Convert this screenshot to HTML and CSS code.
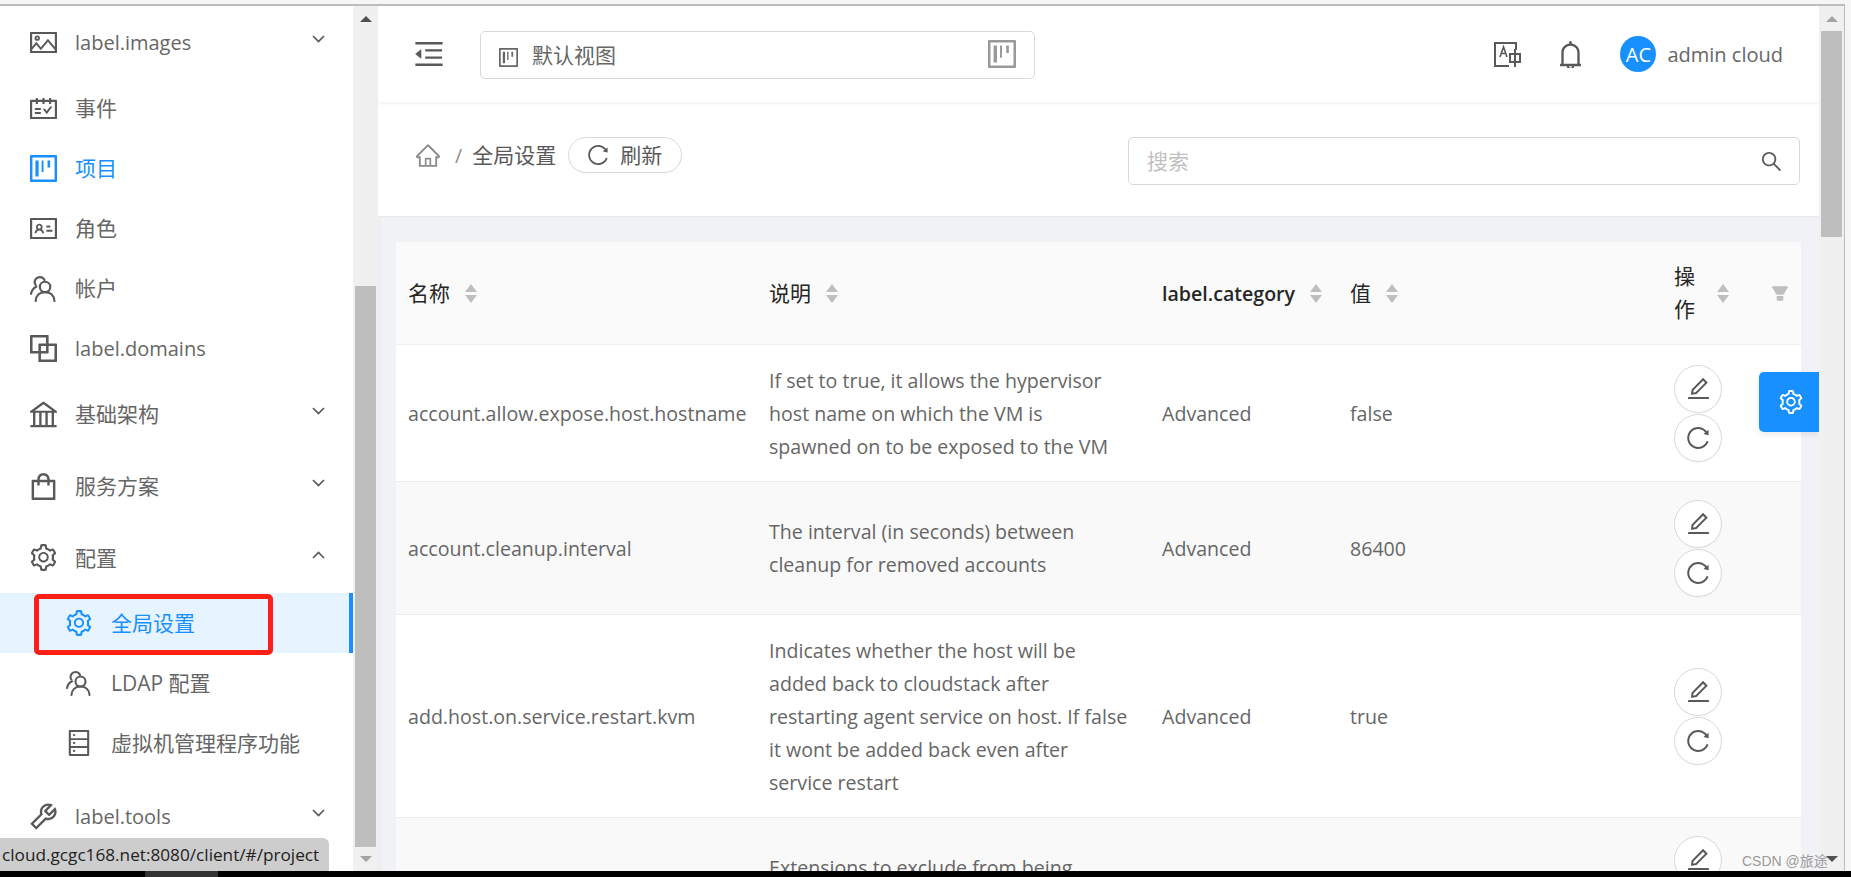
FILE: index.html
```html
<!DOCTYPE html>
<html lang="zh-CN">
<head>
<meta charset="utf-8">
<title>全局设置</title>
<link rel="stylesheet" href="styles.css">
</head>
<body>
<svg class="defs" aria-hidden="true">
  <symbol id="i-setting" viewBox="88 60 848 904"><path d="M924.8 625.7l-65.5-56c3.1-19 4.7-38.4 4.7-57.8s-1.6-38.8-4.7-57.8l65.5-56a32.03 32.03 0 0 0 9.3-35.2l-.9-2.6a443.74 443.74 0 0 0-79.7-137.9l-1.8-2.1a32.12 32.12 0 0 0-35.1-9.5l-81.3 28.9c-30-24.6-63.5-44-99.7-57.6l-15.7-85a32.05 32.05 0 0 0-25.8-25.7l-2.7-.5c-52.1-9.4-106.9-9.4-159 0l-2.7.5a32.05 32.05 0 0 0-25.8 25.7l-15.8 85.4a351.86 351.86 0 0 0-99 57.4l-81.9-29.1a32 32 0 0 0-35.1 9.5l-1.8 2.1a446.02 446.02 0 0 0-79.7 137.9l-.9 2.6c-4.5 12.5-.8 26.5 9.3 35.2l66.3 56.6c-3.1 18.8-4.6 38-4.6 57.1 0 19.2 1.5 38.4 4.6 57.1L99 625.5a32.03 32.03 0 0 0-9.3 35.2l.9 2.6c18.1 50.4 44.9 96.9 79.7 137.9l1.8 2.1a32.12 32.12 0 0 0 35.1 9.5l81.9-29.1c29.8 24.5 63.1 43.9 99 57.4l15.8 85.4a32.05 32.05 0 0 0 25.8 25.7l2.7.5a449.4 449.4 0 0 0 159 0l2.7-.5a32.05 32.05 0 0 0 25.8-25.7l15.7-85a350 350 0 0 0 99.7-57.6l81.3 28.9a32 32 0 0 0 35.1-9.5l1.8-2.1c34.8-41.1 61.6-87.5 79.7-137.9l.9-2.6c4.5-12.3.8-26.3-9.3-35zM788.3 465.9c2.5 15.1 3.8 30.6 3.8 46.1s-1.3 31-3.8 46.1l-6.6 40.1 74.7 63.9a370.03 370.03 0 0 1-42.6 73.6L721 702.8l-31.4 25.8c-23.9 19.6-50.5 35-79.3 45.8l-38.1 14.3-17.9 97a377.5 377.5 0 0 1-85 0l-17.9-97.2-37.8-14.5c-28.5-10.8-55-26.2-78.7-45.7l-31.4-25.9-93.4 33.2c-17-22.9-31.2-47.6-42.6-73.6l75.5-64.5-6.5-40c-2.4-14.9-3.7-30.3-3.7-45.5 0-15.3 1.2-30.6 3.7-45.5l6.5-40-75.5-64.5c11.3-26.1 25.6-50.7 42.6-73.6l93.4 33.2 31.4-25.9c23.7-19.5 50.2-34.9 78.7-45.7l37.9-14.3 17.9-97.2c28.1-3.2 56.8-3.2 85 0l17.9 97 38.1 14.3c28.7 10.8 55.4 26.2 79.3 45.8l31.4 25.8 92.8-32.9c17 22.9 31.2 47.6 42.6 73.6L781.8 426l6.5 39.9zM512 326c-97.2 0-176 78.8-176 176s78.8 176 176 176 176-78.8 176-176-78.8-176-176-176zm79.2 255.2A111.6 111.6 0 0 1 512 614c-29.9 0-58-11.7-79.2-32.8A111.6 111.6 0 0 1 400 502c0-29.9 11.7-58 32.8-79.2C454 401.6 482.1 390 512 390c29.9 0 58 11.6 79.2 32.8A111.6 111.6 0 0 1 624 502c0 29.9-11.7 58-32.8 79.2z"/></symbol>
  <symbol id="i-picture" viewBox="64 160 896 704"><path d="M928 160H96c-17.7 0-32 14.3-32 32v640c0 17.7 14.3 32 32 32h832c17.7 0 32-14.3 32-32V192c0-17.7-14.3-32-32-32zm-40 632H136v-39.9l138.5-164.3 150.1 178L658.1 489 888 761.6V792zm0-129.8L664.2 396.8c-3.2-3.8-9-3.8-12.2 0L424.6 666.4l-144-170.7c-3.2-3.8-9-3.8-12.2 0L136 652.7V232h752v430.2zM304 456a88 88 0 1 0 0-176 88 88 0 0 0 0 176zm0-116c15.5 0 28 12.5 28 28s-12.5 28-28 28-28-12.5-28-28 12.5-28 28-28z"/></symbol>
  <symbol id="i-schedule" viewBox="64 160 896 704"><path d="M928 224H768v-56c0-4.4-3.6-8-8-8h-56c-4.4 0-8 3.6-8 8v56H548v-56c0-4.4-3.6-8-8-8h-56c-4.4 0-8 3.6-8 8v56H328v-56c0-4.4-3.6-8-8-8h-56c-4.4 0-8 3.6-8 8v56H96c-17.7 0-32 14.3-32 32v576c0 17.7 14.3 32 32 32h832c17.7 0 32-14.3 32-32V256c0-17.7-14.3-32-32-32zm-40 568H136V296h120v56c0 4.4 3.6 8 8 8h56c4.4 0 8-3.6 8-8v-56h148v56c0 4.4 3.6 8 8 8h56c4.4 0 8-3.6 8-8v-56h148v56c0 4.4 3.6 8 8 8h56c4.4 0 8-3.6 8-8v-56h120v496zM416 496H232c-4.4 0-8 3.6-8 8v48c0 4.4 3.6 8 8 8h184c4.4 0 8-3.6 8-8v-48c0-4.4-3.6-8-8-8zm0 136H232c-4.4 0-8 3.6-8 8v48c0 4.4 3.6 8 8 8h184c4.4 0 8-3.6 8-8v-48c0-4.4-3.6-8-8-8zm308.2-177.4L620.6 598.3l-52.8-73.1c-3-4.2-7.8-6.6-12.9-6.6H500c-6.5 0-10.3 7.4-6.5 12.7l114.1 158.2a15.9 15.9 0 0 0 25.8 0l165-228.7c3.8-5.3 0-12.7-6.5-12.7H737c-5-.1-9.8 2.4-12.8 6.5z"/></symbol>
  <symbol id="i-project" viewBox="112 112 800 800"><path d="M280 752h80c4.400 0 8-3.600 8-8V280c0-4.400-3.600-8-8-8h-80c-4.400 0-8 3.600-8 8v464c0 4.400 3.600 8 8 8zm184-136h40c4.400 0 8-3.600 8-8V280c0-4.400-3.600-8-8-8h-40c-4.400 0-8 3.600-8 8v328c0 4.400 3.600 8 8 8zm176-136h60c4.400 0 8-3.600 8-8V280c0-4.400-3.600-8-8-8h-60c-4.400 0-8 3.600-8 8v192c0 4.400 3.600 8 8 8zm240-368H144c-17.700 0-32 14.300-32 32v736c0 17.700 14.300 32 32 32h736c17.700 0 32-14.300 32-32V144c0-17.700-14.300-32-32-32zm-40 728H184V184h656v656z"/></symbol>
  <symbol id="i-idcard" viewBox="64 160 896 704"><path d="M928 160H96c-17.7 0-32 14.3-32 32v640c0 17.7 14.3 32 32 32h832c17.7 0 32-14.3 32-32V192c0-17.7-14.3-32-32-32zm-40 632H136V232h752v560zM610.3 476h123.400c1.300 0 2.300-3.600 2.300-8v-48c0-4.400-1-8-2.300-8H610.300c-1.300 0-2.300 3.600-2.300 8v48c0 4.400 1 8 2.300 8zm4.800 144h185.700c3.900 0 7.100-3.600 7.100-8v-48c0-4.400-3.200-8-7.100-8H615.100c-3.900 0-7.100 3.600-7.100 8v48c0 4.400 3.200 8 7.100 8zM224 673h43.900c4.200 0 7.600-3.300 7.900-7.500 3.800-50.500 46-90.500 97.200-90.500s93.400 40 97.200 90.500c.3 4.200 3.700 7.500 7.900 7.500H522a8 8 0 0 0 8-8.400c-2.800-53.300-32-99.700-74.600-126.100a111.800 111.800 0 0 0 29.100-75.500c0-61.900-49.900-112-111.400-112s-111.400 50.100-111.400 112c0 29.100 11 55.500 29.100 75.500a158.090 158.090 0 0 0-74.600 126.100c-.4 4.600 3.200 8.400 7.800 8.400zm149-262c28.500 0 51.700 23.300 51.700 52s-23.200 52-51.700 52-51.700-23.300-51.700-52 23.200-52 51.700-52z"/></symbol>
  <symbol id="i-team" viewBox="0 0 26 26"><g fill="none" stroke="currentColor" stroke-width="2.100" stroke-linecap="round"><circle cx="14.500" cy="11.500" r="5"/><path d="M5.500 25c.3-5.500 4-8.500 9-8.500s8.700 3 9 8.500"/><path d="M5.400 9.500C4.800 8.800 4.500 7.900 4.500 7c0-2.800 2.200-5 5-5 2 0 3.800 1.200 4.500 3"/><path d="M1 18c.6-3 2.200-5.400 5-6.700"/></g></symbol>
  <symbol id="i-block" viewBox="152 152 720 720"><path d="M856 376H648V168c0-8.800-7.200-16-16-16H168c-8.800 0-16 7.200-16 16v464c0 8.800 7.200 16 16 16h208v208c0 8.800 7.200 16 16 16h464c8.800 0 16-7.200 16-16V392c0-8.800-7.200-16-16-16zm-480 16v188H220V220h360v156H392c-8.800 0-16 7.200-16 16zm204 52v136H444V444h136zm224 360H444V648h188c8.800 0 16-7.200 16-16V444h156v360z"/></symbol>
  <symbol id="i-bank" viewBox="100 120 824 784"><path d="M894 462c30.900 0 43.800-39.700 18.700-58L530.800 126.200a31.810 31.810 0 0 0-37.600 0L111.300 404c-25.100 18.200-12.200 58 18.800 58H192v374h-72c-4.400 0-8 3.600-8 8v52c0 4.400 3.600 8 8 8h784c4.400 0 8-3.600 8-8v-52c0-4.400-3.600-8-8-8h-72V462h62zM512 196.700l271.100 197.200H240.900L512 196.700zM264 462h117v374H264V462zm189 0h117v374H453V462zm307 374H642V462h118v374z"/></symbol>
  <symbol id="i-shopping" viewBox="160 112 704 800"><path d="M832 312H696v-16c0-101.600-82.400-184-184-184s-184 82.400-184 184v16H192c-17.700 0-32 14.300-32 32v536c0 17.700 14.300 32 32 32h640c17.700 0 32-14.300 32-32V344c0-17.700-14.300-32-32-32zm-432-16c0-61.900 50.100-112 112-112s112 50.100 112 112v16H400v-16zm392 544H232V384h96v88c0 4.400 3.600 8 8 8h56c4.400 0 8-3.600 8-8v-88h224v88c0 4.400 3.600 8 8 8h56c4.400 0 8-3.600 8-8v-88h96v456z"/></symbol>
  <symbol id="i-database" viewBox="160 64 704 896"><path d="M832 64H192c-17.700 0-32 14.300-32 32v832c0 17.700 14.300 32 32 32h640c17.700 0 32-14.300 32-32V96c0-17.700-14.300-32-32-32zm-600 72h560v208H232V136zm560 480H232V408h560v208zm0 272H232V680h560v208zM304 240a40 40 0 1 0 80 0 40 40 0 1 0-80 0zm0 272a40 40 0 1 0 80 0 40 40 0 1 0-80 0zm0 272a40 40 0 1 0 80 0 40 40 0 1 0-80 0z"/></symbol>
  <symbol id="i-tool" viewBox="100 100 824 824"><path d="M876.600 239.500c-.5-.9-1.200-1.800-2-2.500-5-5-13.100-5-18.100 0L684.200 409.300l-67.900-67.900L788.700 169c.8-.8 1.400-1.600 2-2.500 3.600-6.100 1.600-13.900-4.500-17.500-98.200-58-226.800-44.700-311.300 39.700-67 67-89.200 162-66.500 247.400l-293 293c-3 3-2.800 7.900.3 11l169.700 169.700c3.100 3.100 8.100 3.300 11 .3l292.900-292.900c85.500 22.800 180.500.7 247.600-66.400 84.400-84.500 97.700-213.100 39.700-311.300zM786 499.800c-58.100 58.100-145.300 69.300-214.600 33.600l-8.800 8.800-.1-.1-274 274.100-79.200-79.200 230.100-230.100s0 .1.100.1l52.800-52.800c-35.700-69.300-24.500-156.500 33.600-214.600a184.200 184.200 0 0 1 144-53.500L537 318.900a32.050 32.050 0 0 0 0 45.300l124.500 124.500a32.050 32.050 0 0 0 45.300 0l132.800-132.800c3.700 51.800-14.400 104.800-53.600 143.900z"/></symbol>
  <symbol id="i-fold" viewBox="112 160 800 704"><path d="M408 442h480c4.400 0 8-3.600 8-8v-56c0-4.400-3.600-8-8-8H408c-4.400 0-8 3.600-8 8v56c0 4.400 3.600 8 8 8zm-8 204c0 4.400 3.600 8 8 8h480c4.400 0 8-3.600 8-8v-56c0-4.400-3.600-8-8-8H408c-4.400 0-8 3.600-8 8v56zm504-486H120c-4.400 0-8 3.600-8 8v56c0 4.400 3.600 8 8 8h784c4.400 0 8-3.600 8-8v-56c0-4.400-3.600-8-8-8zm0 632H120c-4.400 0-8 3.600-8 8v56c0 4.400 3.600 8 8 8h784c4.400 0 8-3.600 8-8v-56c0-4.400-3.600-8-8-8zM115.400 518.900L271.700 642c5.800 4.600 14.400.5 14.400-6.900V388.900c0-7.400-8.500-11.500-14.400-6.900L115.400 505.100a8.740 8.740 0 0 0 0 13.800z"/></symbol>
  <symbol id="i-home" viewBox="58 84 908 856"><path d="M946.500 505L560.100 118.800l-25.900-25.900a31.500 31.500 0 0 0-44.400 0L77.500 505a63.900 63.900 0 0 0-18.800 46c.4 35.200 29.700 63.300 64.900 63.300h42.500V940h691.800V614.300h43.400c17.100 0 33.200-6.700 45.300-18.800a63.600 63.600 0 0 0 18.700-45.300c0-17-6.700-33.100-18.800-45.200zM568 868H456V664h112v204zm217.900-325.700V868H632V640c0-22.100-17.900-40-40-40H432c-22.100 0-40 17.900-40 40v228H238.100V542.300h-96l370-369.700 23.100 23.100L882 542.300h-96.100z"/></symbol>
  <symbol id="i-reload" viewBox="100 90 830 845"><path d="M909.100 209.300l-56.400 44.100C775.800 155.100 656.200 92 521.900 92 290 92 102.300 279.500 102 511.500 101.700 743.700 289.800 932 521.900 932c181.300 0 335.800-115 394.600-276.100 1.500-4.200-.7-8.900-4.900-10.300l-56.700-19.500a8 8 0 0 0-10.100 4.800c-1.800 5-3.800 10-5.900 14.900-17.300 41-42.100 77.800-73.700 109.400A344.770 344.770 0 0 1 655.900 829c-42.300 17.900-87.400 27-133.800 27-46.500 0-91.500-9.100-133.800-27A341.500 341.500 0 0 1 279 755.200a342.160 342.160 0 0 1-73.700-109.400c-17.900-42.400-27-87.400-27-133.900s9.100-91.500 27-133.900c17.300-41 42.100-77.800 73.700-109.400 31.600-31.600 68.400-56.400 109.300-73.800 42.300-17.900 87.400-27 133.800-27 46.500 0 91.500 9.100 133.800 27a341.500 341.500 0 0 1 109.300 73.800c9.900 9.900 19.200 20.400 27.800 31.400l-60.200 47a8 8 0 0 0 3 14.100l175.600 43c5 1.200 9.900-2.600 9.900-7.700l.8-180.900c-.1-6.600-7.800-10.300-13-6.200z"/></symbol>
  <symbol id="i-edit" viewBox="112 112 800 800"><path d="M257.700 752c2 0 4-.2 6-.5L431.900 722c2-.4 3.900-1.300 5.300-2.800l423.900-423.900a9.960 9.960 0 0 0 0-14.100L694.900 114.900c-1.900-1.900-4.400-2.900-7.100-2.900s-5.200 1-7.100 2.900L256.800 538.800c-1.500 1.500-2.400 3.300-2.800 5.300l-29.500 168.200a33.500 33.500 0 0 0 9.400 29.800c6.600 6.400 14.900 9.900 23.800 9.900zm67.400-174.400L687.800 215l73.300 73.300-362.700 362.600-88.900 15.700 15.600-89zM880 836H144c-17.700 0-32 14.300-32 32v36c0 4.400 3.600 8 8 8h784c4.400 0 8-3.600 8-8v-36c0-17.700-14.300-32-32-32z"/></symbol>
  <symbol id="i-search" viewBox="112 112 800 800"><path d="M909.600 854.500L649.900 594.800C690.200 542.700 712 479 712 412c0-80.200-31.300-155.400-87.900-212.100-56.600-56.700-132-87.900-212.100-87.900s-155.500 31.300-212.100 87.900C143.200 256.500 112 331.800 112 412c0 80.100 31.300 155.500 87.900 212.100C256.500 680.800 331.800 712 412 712c67 0 130.600-21.800 182.700-62l259.700 259.600a8.200 8.200 0 0 0 11.600 0l43.600-43.500a8.200 8.200 0 0 0 0-11.600zM570.400 570.400C528 612.700 471.800 636 412 636s-116-23.300-158.400-65.600C211.300 528 188 471.800 188 412s23.300-116 65.600-158.400C296 211.300 352.200 188 412 188s116 23.200 158.400 65.600S636 352.200 636 412s-23.300 116-65.600 158.400z"/></symbol>
  <symbol id="i-bell" viewBox="200 72 624 824"><path d="M816 768h-24V428c0-141.100-104.300-257.700-240-277.100V112c0-22.100-17.900-40-40-40s-40 17.900-40 40v38.900c-135.700 19.400-240 136-240 277.100v340h-24c-17.700 0-32 14.300-32 32v32c0 4.400 3.600 8 8 8h216c0 61.800 50.200 112 112 112s112-50.200 112-112h216c4.400 0 8-3.600 8-8v-32c0-17.700-14.300-32-32-32zM512 888c-26.500 0-48-21.500-48-48h96c0 26.500-21.500 48-48 48zM304 768V428c0-55.600 21.600-107.800 60.900-147.100S456.400 220 512 220c55.600 0 107.800 21.600 147.100 60.900S720 372.400 720 428v340H304z"/></symbol>
  <symbol id="i-filter" viewBox="112 154 800 716"><path d="M349 838c0 17.700 14.200 32 31.800 32h262.400c17.600 0 31.800-14.300 31.800-32V642H349v196zm531.100-684H143.900c-24.500 0-39.800 26.700-27.500 48l221.300 376h348.800l221.300-376c12.100-21.300-3.200-48-27.700-48z"/></symbol>
  <symbol id="i-lang" viewBox="0 0 27 25"><g fill="none" stroke="currentColor" stroke-width="2"><path d="M22 8V1H1v23h14"/></g><g fill="none" stroke="currentColor" stroke-width="1.600"><path d="M6 15l3.500-10 3.500 10M7.200 11.500h4.600"/></g><g fill="none" stroke="currentColor" stroke-width="2"><rect x="16" y="12" width="10" height="8"/><path d="M21 7v18"/></g></symbol>
  <symbol id="i-down" viewBox="0 0 13 8"><path d="M1 1l5.500 5.500L12 1" fill="none" stroke="currentColor" stroke-width="1.700"/></symbol>
  <symbol id="i-up" viewBox="0 0 13 8"><path d="M1 7l5.500-5.500L12 7" fill="none" stroke="currentColor" stroke-width="1.700"/></symbol>
  <symbol id="i-sort" viewBox="0 0 12 19"><path d="M6 0l6 8H0zM0 11h12l-6 8z"/></symbol>
</svg>

<div class="top-strip"></div>
<div class="window">
  <aside class="sidebar">
    <nav class="menu">
      <a class="item tall"><svg class="ic"><use href="#i-picture"/></svg><span class="lbl">label.images</span><svg class="chev"><use href="#i-down"/></svg></a>
      <a class="item"><svg class="ic"><use href="#i-schedule"/></svg><span class="lbl cn">事件</span></a>
      <a class="item active-top"><svg class="ic"><use href="#i-project"/></svg><span class="lbl cn">项目</span></a>
      <a class="item"><svg class="ic"><use href="#i-idcard"/></svg><span class="lbl cn">角色</span></a>
      <a class="item"><svg class="ic"><use href="#i-team"/></svg><span class="lbl cn">帐户</span></a>
      <a class="item"><svg class="ic"><use href="#i-block"/></svg><span class="lbl">label.domains</span></a>
      <a class="item tall"><svg class="ic"><use href="#i-bank"/></svg><span class="lbl cn">基础架构</span><svg class="chev"><use href="#i-down"/></svg></a>
      <a class="item tall"><svg class="ic"><use href="#i-shopping"/></svg><span class="lbl cn">服务方案</span><svg class="chev"><use href="#i-down"/></svg></a>
      <a class="item open"><svg class="ic"><use href="#i-setting"/></svg><span class="lbl cn">配置</span><svg class="chev chev-up"><use href="#i-up"/></svg></a>
      <div class="submenu">
        <a class="item sub selected"><svg class="ic"><use href="#i-setting"/></svg><span class="lbl cn">全局设置</span></a>
        <a class="item sub"><svg class="ic"><use href="#i-team"/></svg><span class="lbl cn">LDAP 配置</span></a>
        <a class="item sub"><svg class="ic"><use href="#i-database"/></svg><span class="lbl cn">虚拟机管理程序功能</span></a>
      </div>
      <a class="item tall"><svg class="ic"><use href="#i-tool"/></svg><span class="lbl">label.tools</span><svg class="chev"><use href="#i-down"/></svg></a>
    </nav>
    <div class="annotation"></div>
  </aside>
  <div class="scrollbar side-bar">
    <span class="arrow up dark"></span>
    <span class="thumb thumb-side"></span>
    <span class="arrow down"></span>
  </div>
  <main class="main">
    <header class="topbar">
      <svg class="fold"><use href="#i-fold"/></svg>
      <div class="project-select">
        <svg class="sel-ic"><use href="#i-project"/></svg>
        <span class="sel-text cn">默认视图</span>
        <svg class="sel-right"><use href="#i-project"/></svg>
      </div>
      <div class="top-right">
        <svg class="lang"><use href="#i-lang"/></svg>
        <svg class="bell"><use href="#i-bell"/></svg>
        <span class="avatar">AC</span>
        <span class="username">admin cloud</span>
      </div>
    </header>
    <section class="crumbbar">
      <svg class="home"><use href="#i-home"/></svg>
      <span class="sep">/</span>
      <span class="crumb cn">全局设置</span>
      <button class="refresh cn"><svg class="reload-ic"><use href="#i-reload"/></svg><span class="refresh-text">刷新</span></button>
      <div class="search"><span class="placeholder cn">搜索</span><svg class="search-ic"><use href="#i-search"/></svg></div>
    </section>
    <section class="content">
      <div class="table">
        <div class="row head">
          <div class="cell"><span class="cn">名称</span><svg class="sort"><use href="#i-sort"/></svg></div>
          <div class="cell"><span class="cn">说明</span><svg class="sort"><use href="#i-sort"/></svg></div>
          <div class="cell"><span class="strong">label.category</span><svg class="sort"><use href="#i-sort"/></svg></div>
          <div class="cell"><span class="cn">值</span><svg class="sort"><use href="#i-sort"/></svg></div>
          <div class="cell op"><span class="op-title cn">操作</span><svg class="sort"><use href="#i-sort"/></svg></div>
          <div class="cell filter-cell"><svg class="filter"><use href="#i-filter"/></svg></div>
        </div>
        <div class="row">
          <div class="cell">account.allow.expose.host.hostname</div>
          <div class="cell desc">If set to true, it allows the hypervisor host name on which the VM is spawned on to be exposed to the VM</div>
          <div class="cell">Advanced</div>
          <div class="cell">false</div>
          <div class="cell actions"><button class="circle"><svg class="edit-ic"><use href="#i-edit"/></svg></button><button class="circle"><svg class="reload-ic"><use href="#i-reload"/></svg></button></div>
          <div class="cell"></div>
        </div>
        <div class="row alt">
          <div class="cell">account.cleanup.interval</div>
          <div class="cell desc">The interval (in seconds) between cleanup for removed accounts</div>
          <div class="cell">Advanced</div>
          <div class="cell">86400</div>
          <div class="cell actions"><button class="circle"><svg class="edit-ic"><use href="#i-edit"/></svg></button><button class="circle"><svg class="reload-ic"><use href="#i-reload"/></svg></button></div>
          <div class="cell"></div>
        </div>
        <div class="row">
          <div class="cell">add.host.on.service.restart.kvm</div>
          <div class="cell desc">Indicates whether the host will be added back to cloudstack after restarting agent service on host. If false it wont be added back even after service restart</div>
          <div class="cell">Advanced</div>
          <div class="cell">true</div>
          <div class="cell actions"><button class="circle"><svg class="edit-ic"><use href="#i-edit"/></svg></button><button class="circle"><svg class="reload-ic"><use href="#i-reload"/></svg></button></div>
          <div class="cell"></div>
        </div>
        <div class="row alt">
          <div class="cell"></div>
          <div class="cell desc">Extensions to exclude from being migrated</div>
          <div class="cell"></div>
          <div class="cell"></div>
          <div class="cell actions"><button class="circle"><svg class="edit-ic"><use href="#i-edit"/></svg></button><button class="circle"><svg class="reload-ic"><use href="#i-reload"/></svg></button></div>
          <div class="cell"></div>
        </div>
      </div>
    </section>
    <button class="float-gear"><svg class="gear-ic"><use href="#i-setting"/></svg></button>
  </main>
  <div class="scrollbar main-bar">
    <span class="arrow up"></span>
    <span class="thumb thumb-main"></span>
    <span class="arrow down dark"></span>
  </div>
  <div class="page-edge"></div>
  <div class="status">cloud.gcgc168.net:8080/client/#/project</div>
  <div class="watermark">CSDN @旅途</div>
</div>
<div class="taskbar"><span class="task-item"></span></div>
</body>
</html>
```
FILE: styles.css
```css
* { box-sizing: border-box; }
html, body { height: 100%; }
body {
  margin: 0;
  height: 877px;
  overflow: hidden;
  display: flex;
  flex-direction: column;
  background: #f6f6f6;
  font-family: "Open Sans", "Noto Sans CJK SC", sans-serif;
  font-size: 19.6px;
  color: #666;
}
svg { fill: currentColor; display: block; }
.defs { display: none; }
button { font: inherit; color: inherit; padding: 0; }
.cn { font-size: 21px; }

.top-strip { height: 6px; flex: none; border-bottom: 2px solid #bdbdbd; margin-right: 6px; background: #f6f6f6; }
.window { flex: 1; min-height: 0; display: flex; position: relative; overflow: hidden; }
.taskbar { height: 6px; flex: none; background: #000; display: flex; padding-left: 145px; }
.task-item { width: 73px; background: #333; }

/* sidebar */
.sidebar { width: 353px; flex: none; background: #fff; position: relative; }
.menu { display: flex; flex-direction: column; }
.item { height: 60px; display: flex; align-items: center; padding-left: 30px; padding-right: 28px; color: #666; font-size: 20px; }
.item.tall { height: 72px; }
.item.open { height: 71px; }
.item .ic { width: 27px; height: 27px; flex: none; color: #595959; }
.item .lbl { margin-left: 18px; flex: 1; white-space: nowrap; }
.item .lbl.cn { margin-bottom: 2px; }
.chev { width: 13px; height: 8px; flex: none; margin-bottom: 6px; color: #595959; }
.active-top, .active-top .ic { color: #1890ff; }
.submenu { display: flex; flex-direction: column; margin-bottom: 7px; }
.item.sub { padding-left: 66px; }
.item.sub .ic { width: 26px; height: 26px; }
.item.sub .lbl { margin-left: 19px; }
.selected { background: #e6f4ff; border-right: 4px solid #1890ff; color: #1890ff; }
.selected .ic { color: #1890ff; }
.annotation { position: absolute; left: 34px; top: 588px; width: 239px; height: 61px; border: 5px solid #ff2015; border-radius: 5px; }

/* scrollbars */
.scrollbar { width: 25px; flex: none; background: #f0f0f0; display: flex; flex-direction: column; align-items: center; position: relative; padding: 0 2px; }
.arrow { width: 0; height: 0; flex: none; border-left: 6px solid transparent; border-right: 6px solid transparent; }
.arrow.up { border-bottom: 6px solid #a3a3a3; margin-top: 10px; }
.arrow.up.dark { border-bottom-color: #505050; }
.arrow.down { border-top: 6px solid #a3a3a3; margin-top: 9px; }
.arrow.down.dark { border-top-color: #505050; }
.thumb { width: 21px; flex: none; background: #bebebe; }
.thumb-side { height: 561px; margin-top: 264px; }
.thumb-main { height: 206px; margin-top: 9px; }
.main-bar .arrow.down { margin-top: 619px; }

/* main */
.main { flex: 1; min-width: 0; display: flex; flex-direction: column; position: relative; background: #f0f2f5; box-shadow: inset 6px 0 6px -6px rgba(0,0,0,.05); overflow: hidden; }
.topbar { height: 96px; flex: none; background: #fff; display: flex; align-items: center; padding: 0 36px 0 37px; box-shadow: 0 1px 4px rgba(0,21,41,.08); position: relative; }
.fold { width: 28px; height: 24px; color: #595959; }
.project-select { margin-left: 37px; width: 555px; height: 48px; margin-top: 2px; border: 1px solid #d9d9d9; border-radius: 5px; display: flex; align-items: center; padding: 0 18px; }
.sel-ic { width: 19px; height: 19px; margin-top: 4px; color: #666; flex: none; }
.sel-text { margin-left: 14px; margin-bottom: 2px; flex: 1; }
.sel-right { width: 28px; height: 28px; margin-top: -2px; color: #999; flex: none; }
.top-right { margin-left: auto; display: flex; align-items: center; }
.lang { width: 27px; height: 25px; color: #595959; }
.bell { width: 21px; height: 27px; margin-left: 39px; color: #595959; }
.avatar { margin-left: 39px; width: 36px; height: 36px; border-radius: 50%; background: #1890ff; color: #fff; display: flex; align-items: center; justify-content: center; font-size: 20px; }
.username { margin-left: 11px; font-size: 20px; color: #666; }

.crumbbar { height: 115px; flex: none; background: #fff; border-bottom: 1px solid #e8e8e8; display: flex; align-items: center; padding: 0 19px 0 38px; }
.home { width: 24px; height: 23px; color: #8c8c8c; margin-top: -8px; }
.sep { margin-left: 15px; color: #8c8c8c; margin-top: -8px; }
.crumb { margin-left: 10px; color: #595959; margin-top: -10px; }
.refresh { margin-left: 12px; width: 114px; height: 36px; margin-top: -8px; border: 1px solid #d9d9d9; border-radius: 18px; background: #fff; box-shadow: 0 2px 0 rgba(0,0,0,.015); display: flex; align-items: center; padding-left: 19px; gap: 12px; color: #595959; }
.refresh-text { margin-bottom: 2px; }
.refresh .reload-ic { width: 20px; height: 20px; }
.search { margin-left: auto; width: 672px; height: 48px; border: 1px solid #d9d9d9; border-radius: 5px; display: flex; align-items: center; justify-content: space-between; padding: 0 18px; margin-top: 4px; }
.placeholder { color: #bfbfbf; margin-bottom: 2px; }
.search-ic { width: 19px; height: 19px; color: #595959; }

/* table */
.content { flex: 1; min-height: 0; padding: 25px 18px 0; overflow: hidden; }
.table { background: #fff; }
.row { display: grid; grid-template-columns: 361px 393px 188px 324px 98px 41px; border-bottom: 1px solid #eee; padding-block: 18.5px; line-height: 33px; }
.row.alt { background: #f9f9f9; }
.row.head { background: #fafafa; height: 103px; padding-block: 0; color: #262626; }
.cell { padding: 0 12px; display: flex; align-items: center; }
.cell.desc { padding-right: 21px; }
.head .cell { gap: 15px; }
.strong { font-weight: 600; }
.sort { width: 12px; height: 19px; color: #bfbfbf; flex: none; }
.op { gap: 22px !important; }
.op-title { width: 21px; }
.filter-cell { padding: 0 0 0 12px; }
.filter { width: 16px; height: 15px; color: #bfbfbf; }
.actions { flex-direction: column; justify-content: center; align-items: flex-start; height: 95px; align-self: center; gap: 1px; }
.circle { width: 48px; height: 48px; flex: none; border-radius: 50%; border: 1px solid #d9d9d9; background: #fff; display: flex; align-items: center; justify-content: center; color: #595959; box-shadow: 0 2px 0 rgba(0,0,0,.015); }
.edit-ic { width: 21px; height: 21px; }
.circle .reload-ic { width: 22px; height: 22px; }

.float-gear { position: absolute; right: 0; top: 366px; width: 60px; height: 60px; border: 0; border-radius: 5px 0 0 5px; background: #1890ff; color: #fff; display: flex; align-items: center; justify-content: center; padding-left: 4px; box-shadow: 0 3px 6px rgba(0,0,0,.08); }
.gear-ic { width: 24px; height: 24px; }

.page-edge { width: 7px; flex: none; border-left: 1px solid #bdbdbd; background: #f6f6f6; }
.status { position: absolute; left: 0; bottom: 0; height: 33px; width: 329px; background: #cdcdcd; border-radius: 0 6px 0 0; color: #222; font-size: 17.2px; line-height: 33px; padding-left: 2px; white-space: nowrap; }
.watermark { position: absolute; left: 1742px; bottom: 1px; font-family: "Liberation Sans", "Noto Sans CJK SC", sans-serif; font-size: 14px; color: #9a9a9a; white-space: nowrap; }
```
